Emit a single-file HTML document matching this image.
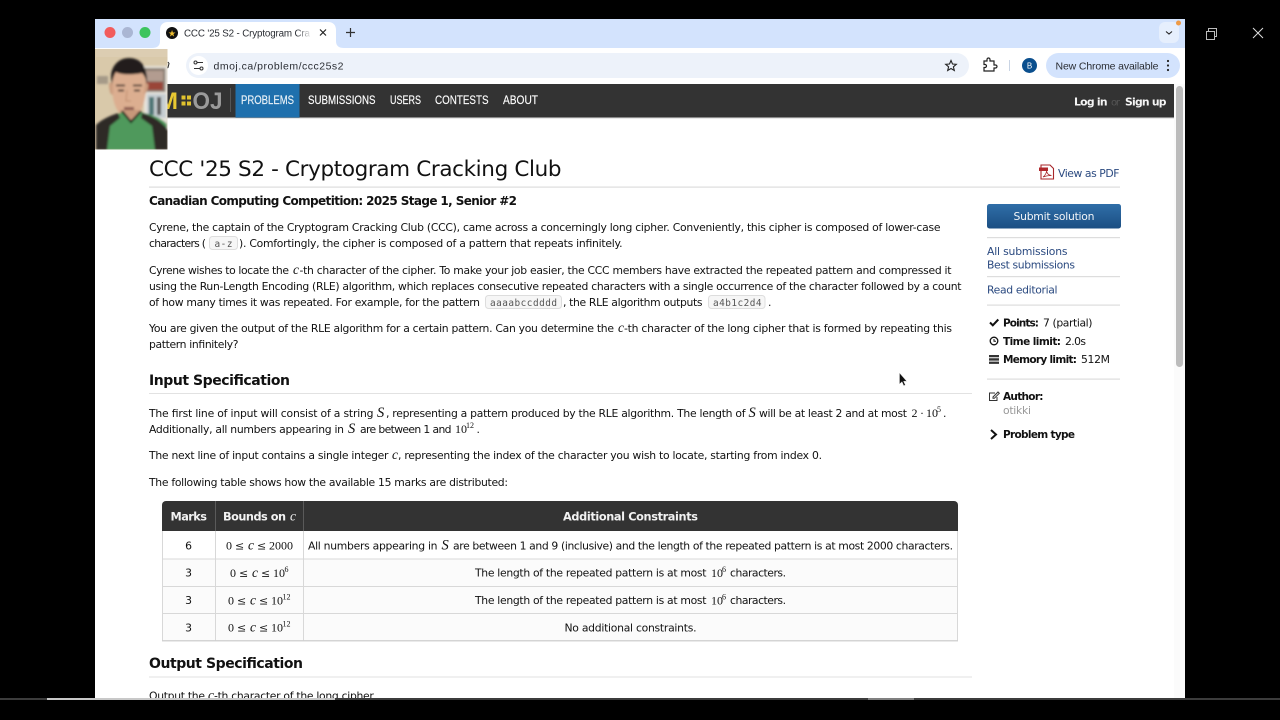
<!DOCTYPE html>
<html><head><meta charset="utf-8"><title>CCC '25 S2 - Cryptogram Cracking Club</title>
<style>
html,body{margin:0;padding:0;background:#000;width:1280px;height:720px;overflow:hidden}
svg{display:block;filter:blur(.3px)}
text{font-family:"DejaVu Sans",sans-serif;font-size:10.8px;fill:#111;white-space:pre}
.b{font-weight:bold}
.m{font-family:"Liberation Serif",serif;font-size:12px}
.q{font-family:"DejaVu Serif",serif;font-size:11px}
.i{font-family:"Liberation Serif",serif;font-style:italic;font-size:13.5px}
.S{font-family:"Liberation Serif",serif;font-style:italic;font-size:14.5px}
.s{font-family:"Liberation Serif",serif;font-size:8px}
.c{font-family:"DejaVu Sans Mono",monospace;font-size:9.4px;fill:#555}
.n{font-family:"Liberation Sans",sans-serif;font-size:11.8px;fill:#fff;stroke:#fff;stroke-width:.15px}
.l{fill:#2b4a80}
.ch{font-family:"Liberation Sans",sans-serif;font-size:10.5px;fill:#2a2d33}
</style></head><body>
<svg width="1280" height="720" viewBox="0 0 1280 720" xmlns="http://www.w3.org/2000/svg">
<defs>
<linearGradient id="btn" x1="0" y1="0" x2="0" y2="1"><stop offset="0" stop-color="#2f6ea8"/><stop offset="1" stop-color="#1b4e82"/></linearGradient>
<linearGradient id="fade" x1="0" y1="0" x2="1" y2="0"><stop offset="0" stop-color="#fff" stop-opacity="0"/><stop offset="1" stop-color="#fff"/></linearGradient>
<filter id="bl"><feGaussianBlur stdDeviation="1"/></filter>
<clipPath id="cam"><rect x="95" y="49" width="72.5" height="100.5"/></clipPath>
<clipPath id="page"><rect x="95" y="118" width="1080" height="580"/></clipPath>
</defs>
<rect width="1280" height="720" fill="#000"/>
<!-- window -->
<rect x="95" y="19" width="1090" height="680" fill="#fff"/>
<rect x="95" y="19" width="1090" height="29" fill="#d3e3fd"/>
<circle cx="110" cy="32.500" r="5.500" fill="#f25c5c"/><circle cx="127.500" cy="32.500" r="5.500" fill="#aab6d3"/><circle cx="145" cy="32.500" r="5.500" fill="#3dc45e"/>
<path d="M152 48c5 0 8-2 8-7v-11c0-5 3-8 8-8h160c5 0 8 3 8 8v11c0 5 3 7 8 7z" fill="#fff"/>
<circle cx="172" cy="33" r="6" fill="#111"/><text x="172" y="36.500" text-anchor="middle" style="font-size:9px;fill:#f0c030">★</text>
<text class="ch" x="184" y="36.500" textLength="126" lengthAdjust="spacing" style="font-size:9.800px">CCC '25 S2 - Cryptogram Cra</text>
<rect x="296" y="25" width="16" height="15" fill="url(#fade)"/>
<path d="M320 29.500l6 6M326 29.500l-6 6" stroke="#222" stroke-width="1.200"/>
<path d="M350.500 28v9M346 32.500h9" stroke="#333" stroke-width="1.200"/>
<rect x="1159" y="22" width="20" height="21" rx="6" fill="#e6effd"/>
<path d="M1166 31.500l3 2.500 3-2.500" fill="none" stroke="#222" stroke-width="1.100"/>
<circle cx="1178.500" cy="23" r="2.500" fill="#ee9a45"/>
<!-- window controls -->
<path d="M1206.500 31.500h8v8h-8zM1208.500 31v-2.500h8v8h-2" fill="none" stroke="#bbb" stroke-width="1"/>
<path d="M1253 28l10 10M1263 28l-10 10" stroke="#ddd" stroke-width="1"/>
<!-- toolbar -->
<rect x="186" y="53" width="783" height="25" rx="12.500" fill="#edf2fa"/>
<circle cx="198.500" cy="65.500" r="9.500" fill="#fff"/>
<path d="M197 62.500h6M194 68.500h6" stroke="#333" stroke-width="1"/><circle cx="195.500" cy="62.500" r="1.500" fill="none" stroke="#333"/><circle cx="201.500" cy="68.500" r="1.500" fill="none" stroke="#333"/>
<text class="ch" x="213.500" y="69.500" textLength="130" lengthAdjust="spacing">dmoj.ca/problem/ccc25s2</text>
<path d="M951 60.500l1.500 3.500 3.800.3-2.900 2.500.9 3.700-3.300-2-3.300 2 .9-3.700-2.900-2.500 3.800-.3z" fill="none" stroke="#222" stroke-width="1.100"/>
<path d="M984 61h3v-1.500a1.500 1.500 0 0 1 3 0V61h4v4h1.500a1.500 1.500 0 0 1 0 3H994v3h-10v-3.500h1a1.500 1.500 0 0 0 0-3h-1z" fill="none" stroke="#222" stroke-width="1.200"/>
<path d="M1009.500 60v11" stroke="#c9d4e4" stroke-width="1"/>
<circle cx="1029.500" cy="65.500" r="7.500" fill="#0b4f8e"/><text x="1029.500" y="68.500" text-anchor="middle" style="font-family:'Liberation Sans',sans-serif;font-size:8px;fill:#fff">B</text>
<rect x="1046" y="53" width="134" height="25" rx="12.500" fill="#d3e3fd"/>
<text class="ch" x="1055.500" y="69.500" textLength="103" lengthAdjust="spacing">New Chrome available</text>
<circle cx="1168" cy="61" r="1.100" fill="#222"/><circle cx="1168" cy="65.500" r="1.100" fill="#222"/><circle cx="1168" cy="70" r="1.100" fill="#222"/>
<!-- nav -->
<rect x="95" y="84" width="1079" height="33.500" fill="#333"/>
<rect x="95" y="117" width="1079" height="1.200" fill="#8a8a8a"/>
<rect x="1174" y="84" width="11" height="615" fill="#fbfbfb"/>
<rect x="1176" y="86" width="7" height="281" rx="3.500" fill="#bcbcbc"/>
<text x="158" y="109" style="font-family:'Liberation Sans',sans-serif;font-weight:bold;font-size:24px;fill:#e8c832">M</text>
<path d="M181.500 95.500h4v4h-4zM187 95.500h4v4h-4zM181.500 101.500h4v4h-4zM187 101.500h4v4h-4z" fill="#e0c22e"/>
<text x="192.500" y="109" textLength="30" lengthAdjust="spacingAndGlyphs" style="font-family:'Liberation Sans',sans-serif;font-weight:bold;font-size:24px;fill:#9b9b9b">OJ</text>
<rect x="230" y="88" width="1" height="24" fill="#555"/>
<rect x="235.500" y="84" width="64" height="33.500" fill="#1f70ad"/>
<text class="n" x="241" y="104" textLength="53" lengthAdjust="spacingAndGlyphs" style="fill:#e4eef5">PROBLEMS</text>
<text class="n" x="308" y="104" textLength="67.500" lengthAdjust="spacingAndGlyphs">SUBMISSIONS</text>
<text class="n" x="390" y="104" textLength="31" lengthAdjust="spacingAndGlyphs">USERS</text>
<text class="n" x="435" y="104" textLength="53.500" lengthAdjust="spacingAndGlyphs">CONTESTS</text>
<text class="n" x="503" y="104" textLength="35" lengthAdjust="spacingAndGlyphs">ABOUT</text>
<text class="b" x="1074" y="105.500" textLength="33.500" lengthAdjust="spacing" style="fill:#f4f4f4;font-size:10.800px">Log in</text>
<text x="1111" y="105.500" textLength="9" lengthAdjust="spacing" style="fill:#555;font-size:10px">or</text>
<text class="b" x="1125" y="105.500" textLength="41.500" lengthAdjust="spacing" style="fill:#f4f4f4;font-size:10.800px">Sign up</text>
<!-- title -->
<text x="149" y="176" textLength="412.500" lengthAdjust="spacing" style="font-size:21.500px;fill:#111">CCC '25 S2 - Cryptogram Cracking Club</text>
<rect x="149" y="186.500" width="971" height="1.200" fill="#ddd"/>
<path d="M1041 165h9l3.500 3.500V179h-12.500z" fill="#fff" stroke="#a8262a" stroke-width="1.100"/><rect x="1039" y="167.500" width="9" height="3.500" fill="#b0282c"/><path d="M1043 177c2-1 4-5 3.500-7 0 3 2 5.500 5 5.500-3 0-6 .5-8.500 1.500z" fill="none" stroke="#a8262a" stroke-width=".8"/>
<text class="l" x="1058" y="177" textLength="61.500" lengthAdjust="spacing">View as PDF</text>
<text class="b" x="149" y="205" textLength="368" lengthAdjust="spacing" style="font-size:12px;fill:#111">Canadian Computing Competition: 2025 Stage 1, Senior #2</text>
<!-- para 1 -->
<text x="149" y="231" textLength="791.500" lengthAdjust="spacing">Cyrene, the captain of the Cryptogram Cracking Club (CCC), came across a concerningly long cipher. Conveniently, this cipher is composed of lower-case</text>
<text x="149" y="247" textLength="57" lengthAdjust="spacing">characters (</text>
<rect x="209.500" y="236.500" width="28" height="13" rx="3" fill="#f6f6f6" stroke="#ddd"/>
<text class="c" x="214.500" y="247" textLength="18" lengthAdjust="spacing">a-z</text>
<text x="239" y="247" textLength="383.500" lengthAdjust="spacing">). Comfortingly, the cipher is composed of a pattern that repeats infinitely.</text>
<!-- para 2 -->
<text x="149" y="274" textLength="140" lengthAdjust="spacing">Cyrene wishes to locate the</text>
<text class="i" x="293" y="274">c</text>
<text x="299.500" y="274" textLength="652" lengthAdjust="spacing">-th character of the cipher. To make your job easier, the CCC members have extracted the repeated pattern and compressed it</text>
<text x="149" y="290" textLength="812.500" lengthAdjust="spacing">using the Run-Length Encoding (RLE) algorithm, which replaces consecutive repeated characters with a single occurrence of the character followed by a count</text>
<text x="149" y="306" textLength="331" lengthAdjust="spacing">of how many times it was repeated. For example, for the pattern</text>
<rect x="485.500" y="295.500" width="76" height="13" rx="3" fill="#f6f6f6" stroke="#ddd"/>
<text class="c" x="490" y="306" textLength="67" lengthAdjust="spacing">aaaabccdddd</text>
<text x="563" y="306" textLength="139.500" lengthAdjust="spacing">, the RLE algorithm outputs</text>
<rect x="708.500" y="295.500" width="56.500" height="13" rx="3" fill="#f6f6f6" stroke="#ddd"/>
<text class="c" x="713" y="306" textLength="48.500" lengthAdjust="spacing">a4b1c2d4</text>
<text x="768" y="306">.</text>
<!-- para 3 -->
<text x="149" y="332" textLength="465" lengthAdjust="spacing">You are given the output of the RLE algorithm for a certain pattern. Can you determine the</text>
<text class="i" x="618" y="332">c</text>
<text x="624" y="332" textLength="328" lengthAdjust="spacing">-th character of the long cipher that is formed by repeating this</text>
<text x="149" y="348" textLength="89.500" lengthAdjust="spacing">pattern infinitely?</text>
<!-- input -->
<text class="b" x="149" y="385" textLength="141" lengthAdjust="spacing" style="font-size:14px;fill:#111">Input Specification</text>
<rect x="149" y="393" width="823" height="1" fill="#e2e2e2"/>
<text x="149" y="417" textLength="224.500" lengthAdjust="spacing">The first line of input will consist of a string</text>
<text class="S" x="377" y="417">S</text>
<text x="386" y="417" textLength="359.500" lengthAdjust="spacing">, representing a pattern produced by the RLE algorithm. The length of</text>
<text class="S" x="748.500" y="417">S</text>
<text x="759" y="417" textLength="148" lengthAdjust="spacing">will be at least 2 and at most</text>
<text class="m" x="911.500" y="417">2</text><text class="m" x="920" y="417">·</text><text class="m" x="926" y="417">10</text><text class="s" x="937" y="412">5</text>
<text x="943" y="417">.</text>
<text x="149" y="433" textLength="195" lengthAdjust="spacing">Additionally, all numbers appearing in</text>
<text class="S" x="348" y="433">S</text>
<text x="360" y="433" textLength="91.500" lengthAdjust="spacing">are between 1 and</text>
<text class="m" x="455" y="433">10</text><text class="s" x="466" y="428">12</text>
<text x="476.500" y="433">.</text>
<text x="149" y="459" textLength="239.500" lengthAdjust="spacing">The next line of input contains a single integer</text>
<text class="i" x="392" y="459">c</text>
<text x="398" y="459" textLength="424" lengthAdjust="spacing">, representing the index of the character you wish to locate, starting from index 0.</text>
<text x="149" y="486" textLength="359" lengthAdjust="spacing">The following table shows how the available 15 marks are distributed:</text>
<!-- table -->
<rect x="162.500" y="531" width="795" height="110" fill="#fff"/>
<rect x="163" y="559" width="794" height="82" fill="#fbfbfb"/>
<path d="M162 531v-26a4 4 0 0 1 4-4h788a4 4 0 0 1 4 4v26z" fill="#333"/>
<path d="M162.500 531v110h795V531M162.500 559h795M162.500 586.500h795M162.500 613.500h795M215.500 531v110M303.500 531v110" fill="none" stroke="#d8d8d8" stroke-width="1"/>
<path d="M162 640.700h796" stroke="#cfcfcf" stroke-width="1.200"/>
<path d="M215.500 501v30M303.500 501v30" stroke="#5a5a5a" stroke-width="1"/>
<text class="b" x="170.500" y="520.500" textLength="36.500" lengthAdjust="spacing" style="fill:#f2f2f2;font-size:11.300px">Marks</text>
<text class="b" x="223" y="520.500" textLength="63" lengthAdjust="spacing" style="fill:#f2f2f2;font-size:11.300px">Bounds on</text>
<text class="i" x="290" y="520.500" style="fill:#f2f2f2">c</text>
<text class="b" x="563" y="520.500" textLength="135" lengthAdjust="spacing" style="fill:#f2f2f2;font-size:11.300px">Additional Constraints</text>
<text x="188.500" y="549.500" text-anchor="middle">6</text><text x="188.500" y="576.500" text-anchor="middle">3</text><text x="188.500" y="604" text-anchor="middle">3</text><text x="188.500" y="631.500" text-anchor="middle">3</text>
<!-- math rows -->
<text class="m" x="226" y="549.500">0</text><text class="q" x="235" y="549.500">≤</text><text class="i" x="248" y="549.500">c</text><text class="q" x="257" y="549.500">≤</text><text class="m" x="269" y="549.500">2000</text>
<text class="m" x="230" y="577">0</text><text class="q" x="239" y="577">≤</text><text class="i" x="252" y="577">c</text><text class="q" x="261" y="577">≤</text><text class="m" x="273" y="577">10</text><text class="s" x="284.500" y="572">6</text>
<text class="m" x="228" y="604.500">0</text><text class="q" x="237" y="604.500">≤</text><text class="i" x="250" y="604.500">c</text><text class="q" x="259" y="604.500">≤</text><text class="m" x="271" y="604.500">10</text><text class="s" x="282.500" y="599.500">12</text>
<text class="m" x="228" y="631.500">0</text><text class="q" x="237" y="631.500">≤</text><text class="i" x="250" y="631.500">c</text><text class="q" x="259" y="631.500">≤</text><text class="m" x="271" y="631.500">10</text><text class="s" x="282.500" y="626.500">12</text>
<text x="308" y="549.500" textLength="129.500" lengthAdjust="spacing">All numbers appearing in</text>
<text class="S" x="441.500" y="549.500">S</text>
<text x="453" y="549.500" textLength="500" lengthAdjust="spacing">are between 1 and 9 (inclusive) and the length of the repeated pattern is at most 2000 characters.</text>
<text x="475" y="576.500" textLength="231.500" lengthAdjust="spacing">The length of the repeated pattern is at most</text>
<text class="m" x="711" y="577">10</text><text class="s" x="722" y="572">6</text>
<text x="730" y="576.500" textLength="56" lengthAdjust="spacing">characters.</text>
<text x="475" y="604" textLength="231.500" lengthAdjust="spacing">The length of the repeated pattern is at most</text>
<text class="m" x="711" y="604.500">10</text><text class="s" x="722" y="599.500">6</text>
<text x="730" y="604" textLength="56" lengthAdjust="spacing">characters.</text>
<text x="564.500" y="631.500" textLength="132" lengthAdjust="spacing">No additional constraints.</text>
<!-- output -->
<text class="b" x="149" y="668" textLength="154" lengthAdjust="spacing" style="font-size:14px;fill:#111">Output Specification</text>
<rect x="149" y="676.500" width="823" height="1" fill="#e2e2e2"/>
<g clip-path="url(#page)">
<text x="149" y="699.500" textLength="56" lengthAdjust="spacing">Output the</text>
<text class="i" x="208" y="699.500">c</text>
<text x="214" y="699.500" textLength="162" lengthAdjust="spacing">-th character of the long cipher.</text>
</g>
<!-- sidebar -->
<rect x="987" y="204" width="134" height="24.500" rx="2.500" fill="url(#btn)"/>
<text x="1013.500" y="220" textLength="81" lengthAdjust="spacing" style="fill:#f2f5f8">Submit solution</text>
<rect x="987" y="237" width="133" height="1.200" fill="#ddd"/>
<text class="l" x="987" y="255" textLength="80.500" lengthAdjust="spacing">All submissions</text>
<text class="l" x="987" y="268.500" textLength="88" lengthAdjust="spacing">Best submissions</text>
<rect x="987" y="276" width="133" height="1.200" fill="#ddd"/>
<text class="l" x="987" y="293.500" textLength="70.500" lengthAdjust="spacing">Read editorial</text>
<rect x="987" y="304.500" width="133" height="1.200" fill="#ddd"/>
<path d="M990 322.500l2.800 2.800 5.500-5.800" fill="none" stroke="#111" stroke-width="2"/>
<text class="b" x="1003" y="326.500" textLength="36" lengthAdjust="spacing" style="font-size:10.500px">Points:</text>
<text x="1043" y="326.500" textLength="49.500" lengthAdjust="spacing">7 (partial)</text>
<circle cx="994" cy="341" r="3.800" fill="none" stroke="#111" stroke-width="1.300"/><path d="M994 339v2.300h2" fill="none" stroke="#111"/>
<text class="b" x="1003" y="345" textLength="58" lengthAdjust="spacing" style="font-size:10.500px">Time limit:</text>
<text x="1065" y="345" textLength="21" lengthAdjust="spacing">2.0s</text>
<path d="M989 355h10v2.300h-10zM989 358.300h10v2.300h-10zM989 361.600h10v2.300h-10z" fill="#333"/>
<text class="b" x="1003" y="363" textLength="74" lengthAdjust="spacing" style="font-size:10.500px">Memory limit:</text>
<text x="1081" y="363" textLength="29" lengthAdjust="spacing">512M</text>
<rect x="987" y="378.500" width="133" height="1.200" fill="#ddd"/>
<path d="M995 393h-5.500v7.500h7.500v-3.500M993 397l5-5 1.300 1.300-5 5h-1.300z" fill="none" stroke="#333" stroke-width="1"/>
<text class="b" x="1003" y="400" textLength="40.500" lengthAdjust="spacing" style="font-size:10.500px">Author:</text>
<text x="1003" y="414" textLength="28" lengthAdjust="spacing" style="fill:#999">otikki</text>
<path d="M991 430l5 4.500-5 4.500" fill="none" stroke="#111" stroke-width="2"/>
<text class="b" x="1003" y="438" textLength="72" lengthAdjust="spacing" style="font-size:10.500px">Problem type</text>
<!-- cursor -->
<path d="M899.500 373v11l2.500-2.300 1.800 4 1.500-.7-1.800-3.800h3.200z" fill="#111" stroke="#ddd" stroke-width=".4"/>
<!-- reload fragment -->
<path d="M168 62l1 1.500-1 4-2 1" fill="none" stroke="#333" stroke-width="1.100"/>
<!-- webcam -->
<g clip-path="url(#cam)">
<rect x="95" y="49" width="73" height="101" fill="#d9c9aa"/>
<rect x="96" y="49" width="72" height="8" fill="#dccdb2"/>
<g filter="url(#bl)">
<rect x="97" y="76" width="11" height="8" fill="#a59a88"/>
<rect x="144" y="66" width="24" height="72" fill="#e8e4dc"/>
<rect x="143.500" y="68" width="22" height="24" fill="#8d8074"/>
<rect x="146" y="71" width="17" height="10" fill="#b39c90"/>
<rect x="146" y="82" width="17" height="8" fill="#9a4438"/>
<rect x="147" y="94" width="19" height="24" fill="#c6ced2"/>
<rect x="149" y="97" width="5" height="18" fill="#4d7676"/>
<rect x="157" y="97" width="4" height="18" fill="#565656"/>
<path d="M112 86c0-20 8-26 17-26s17 7 17 26c0 19-7 32-17 32s-17-13-17-32z" fill="#dcae90"/>
<rect x="120" y="110" width="19" height="18" fill="#c7987a"/>
<path d="M109 86c0-5 2-4 4-2v10c-2 3-4-4-4-8zM145 84c3-2 4 0 3 4s-3 7-4 6z" fill="#cc9e80"/>
<path d="M112 84c-4-15 5-26 17-26 12 0 19 9 18 26-1-6-3-9-5-11-8 2-21 2-26-1-2 3-3 7-4 12z" fill="#241e1b"/>
<rect x="116" y="84.500" width="9" height="1.800" fill="#352a26"/><rect x="133" y="84.500" width="9" height="1.800" fill="#352a26"/>
<rect x="118" y="89.500" width="6" height="2" fill="#3a2c28"/><rect x="134" y="89.500" width="6" height="2" fill="#3a2c28"/>
<path d="M127 90l-1 11h5" fill="none" stroke="#c08e70" stroke-width="1"/>
<rect x="124" y="107" width="10" height="3" fill="#8c5a50"/>
<path d="M96 150v-24c6-7 17-9 26-14l8 9 10-9c10 2 20 5 27 12v26z" fill="#50995c"/>
<path d="M96 150v-25c6-6 14-9 22-12l2 5-10 8-3 24zM168 150v-20c-5-7-14-14-26-17l-1 5 11 8 3 24z" fill="#2d2a28"/>
<path d="M122 111l9 11 10-11" fill="none" stroke="#151515" stroke-width="2"/>
</g>
</g>
<!-- bottom bar -->
<rect x="0" y="698" width="1280" height="22" fill="#000"/>
<rect x="0" y="698" width="1280" height="2" fill="#3c3c3c"/>
<rect x="47" y="698" width="288" height="2" fill="#c8c8c8"/>
<rect x="868" y="698" width="46" height="2" fill="#808080"/>
</svg>
</body></html>
